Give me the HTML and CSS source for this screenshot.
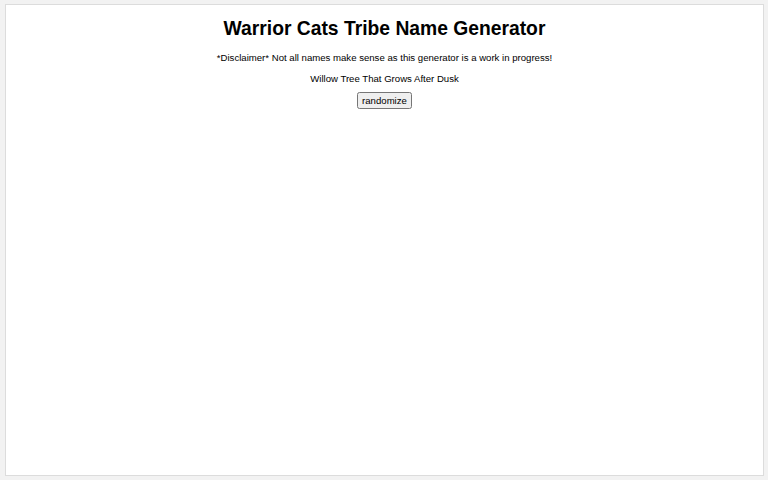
FILE: index.html
```html
<!DOCTYPE html>
<html lang="en">
<head>
  <meta charset="UTF-8" />
  <title>Warrior Cats Tribe Name Generator</title>
  <link rel="stylesheet" href="styles.css">
</head>
<body>
  <main class="page">
    <h1>Warrior Cats Tribe Name Generator</h1>
    <p class="disclaimer">*Disclaimer* Not all names make sense as this generator is a work in progress!</p>
    <p class="name" id="tribeName">Willow Tree That Grows After Dusk</p>
    <button class="roll" onclick="randomize()">randomize</button>
  </main>

  <script>
    const firsts = ["Willow", "Stone", "Rain", "Moon", "Frost", "Cloud"];
    const seconds = ["Tree", "River", "Wind", "Shadow", "Mountain", "Fern"];
    const verbs = ["Grows", "Falls", "Runs", "Sings", "Waits", "Sleeps"];
    const times = ["After Dusk", "Before Dawn", "In Winter", "At Noon", "Under Stars"];

    function pick(list) {
      return list[Math.floor(Math.random() * list.length)];
    }

    function randomize() {
      document.getElementById('tribeName').innerText =
        pick(firsts) + " " + pick(seconds) + " That " + pick(verbs) + " " + pick(times);
    }
  </script>
</body>
</html>
```

FILE: styles.css
```css
html {
  background: #f2f2f2;
}

body {
  margin: 4px 4px 0 5px;
  font-family: 'Liberation Sans', Arial, sans-serif;
}

.page {
  background: #ffffff;
  border: 1px solid #dcdcdc;
  box-sizing: border-box;
  height: 472px;
  text-align: center;
  padding-top: 1px;
}

h1 {
  font-size: 19.3px;
  margin: 12px 0 0;
}

.disclaimer {
  font-size: 9.6px;
  margin: 12px 0 0;
}

.name {
  font-size: 9.6px;
  margin: 10px 0 0;
}

.roll {
  font-family: 'Liberation Sans', Arial, sans-serif;
  font-size: 9.6px;
  padding: 1px 3px;
  margin-top: 8px;
}
```
